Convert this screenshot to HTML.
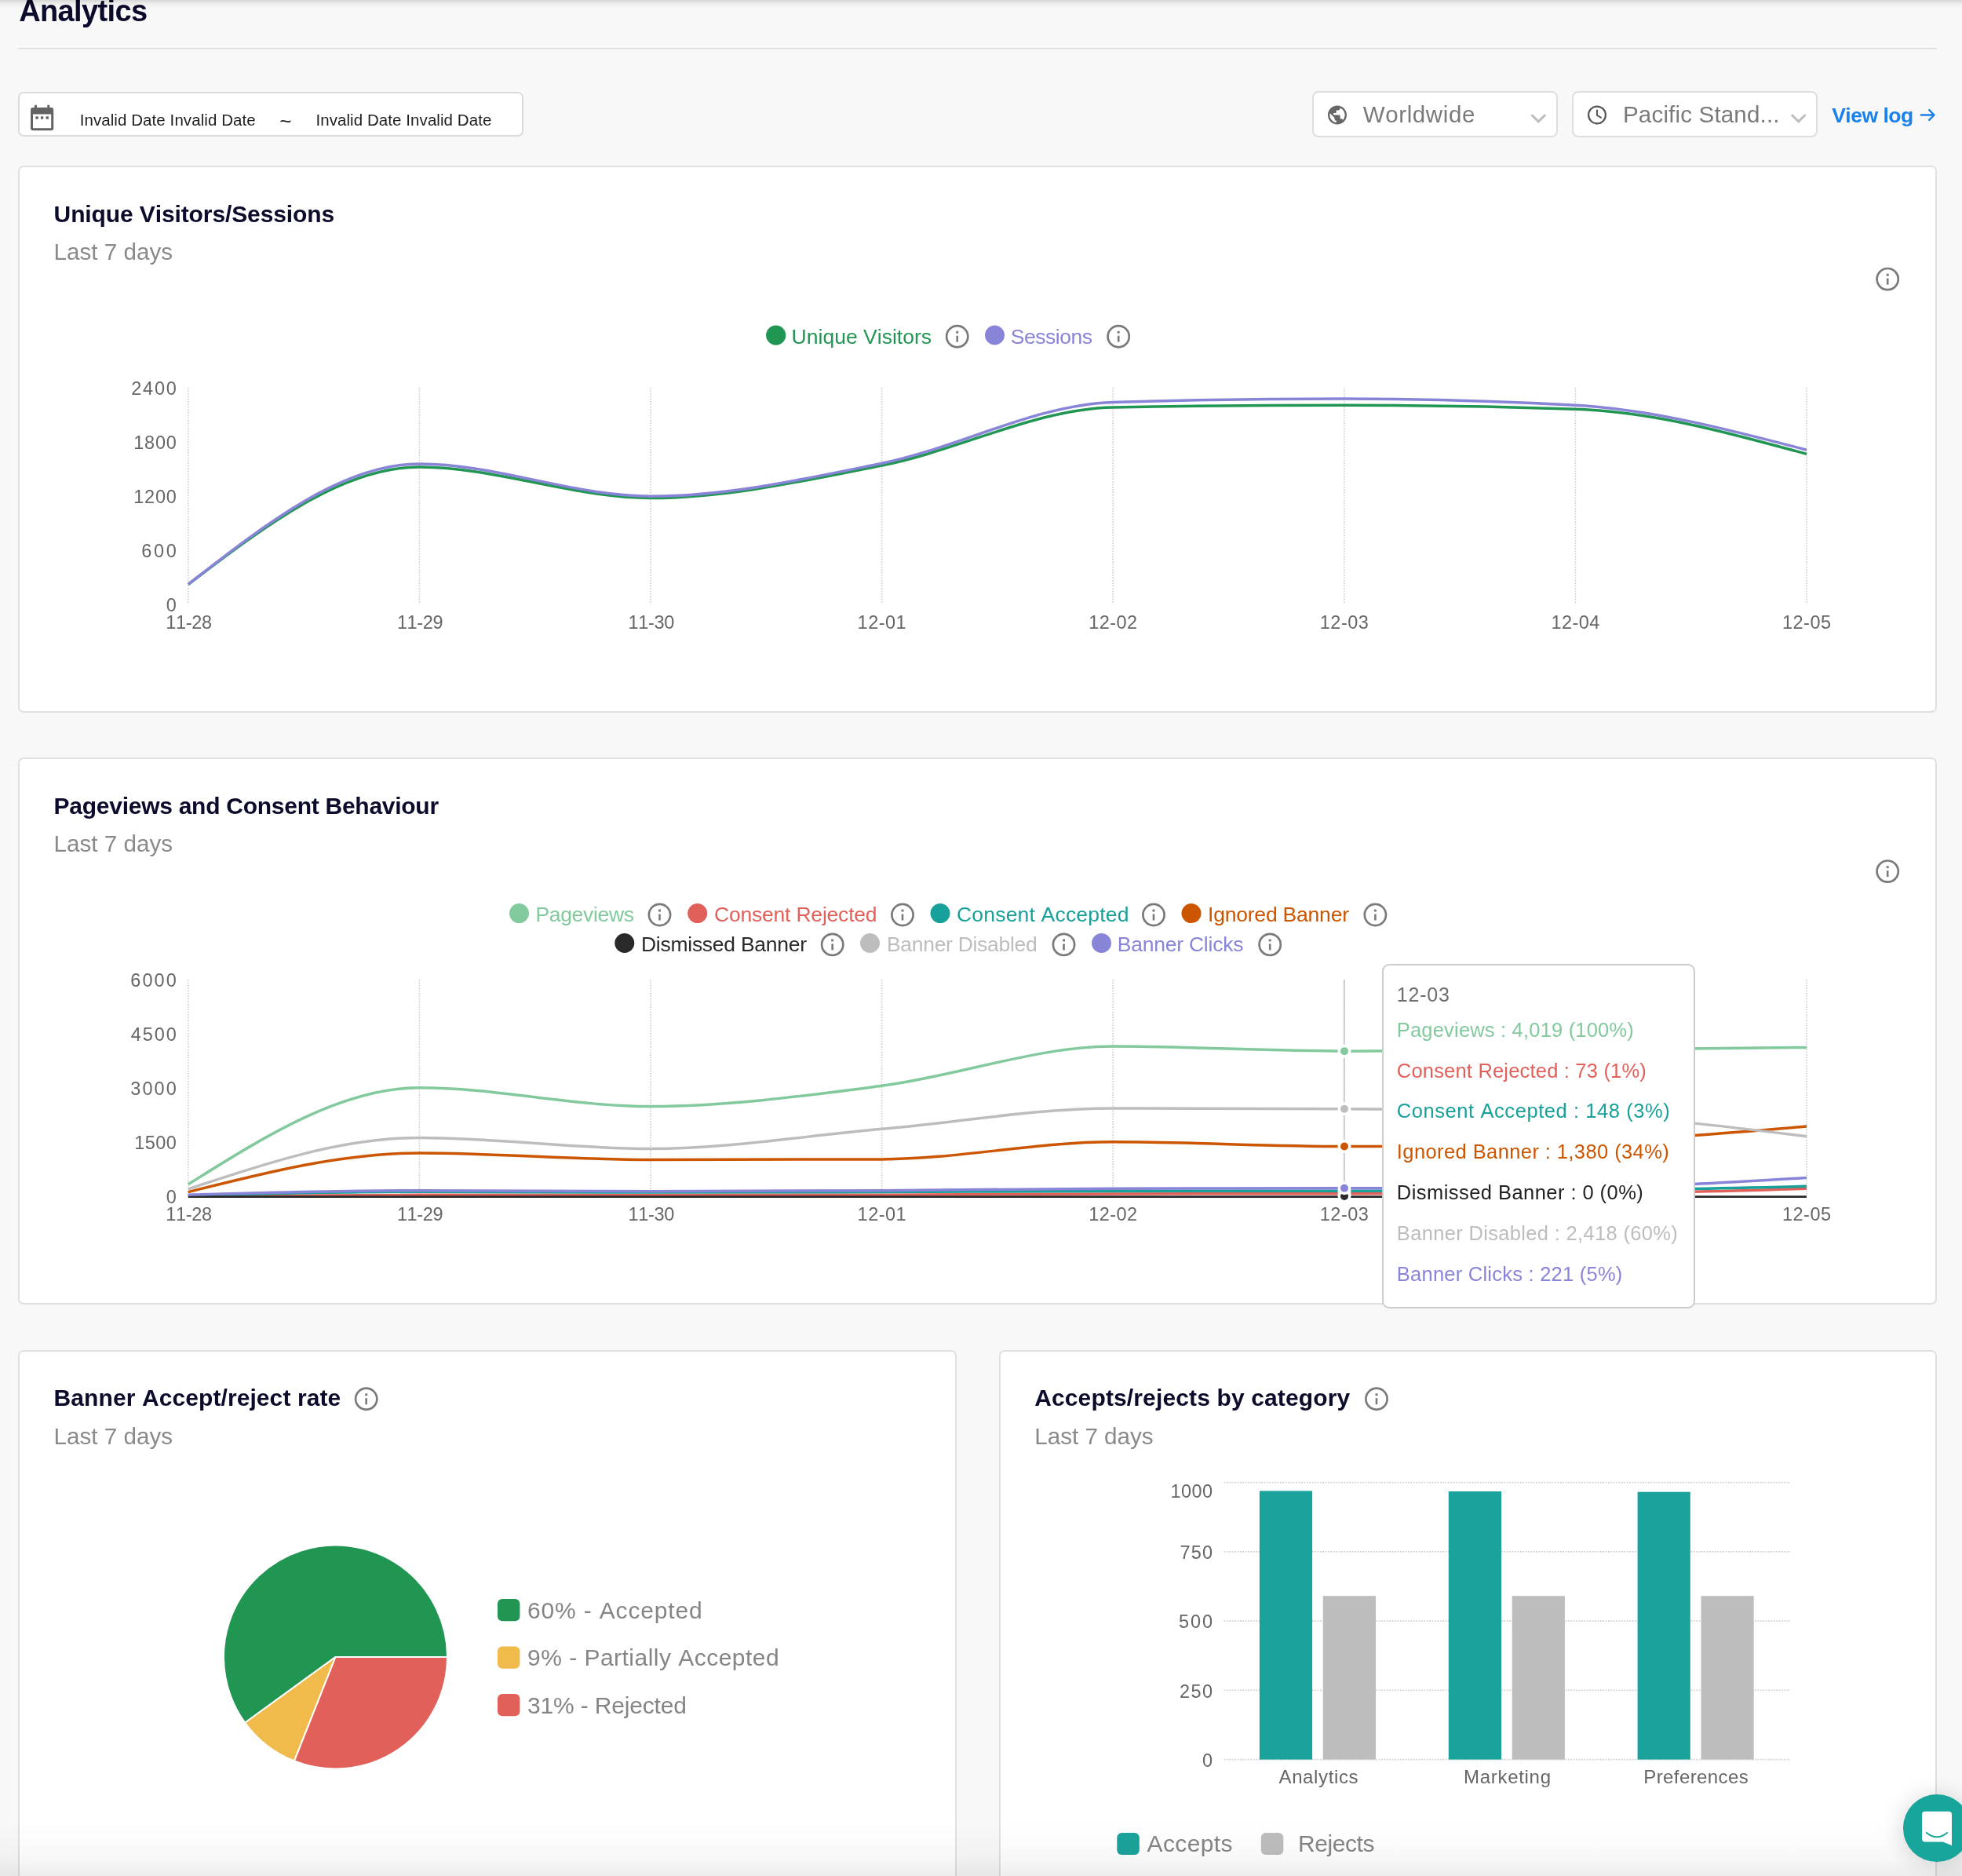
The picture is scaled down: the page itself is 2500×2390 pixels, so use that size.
<!DOCTYPE html>
<html lang="en"><head><meta charset="utf-8"><title>Analytics</title>
<style>
*{box-sizing:border-box;margin:0;padding:0}
html,body{width:2500px;height:2390px;overflow:hidden;background:#f8f8f8;}
body{position:relative;font-family:"Liberation Sans",sans-serif;font-kerning:none;-webkit-font-smoothing:antialiased;}
.t{position:absolute;white-space:nowrap;display:block;}
.hr{position:absolute;height:3px;background:linear-gradient(to bottom,#dcdcdc 0,#dcdcdc 1px,#e9e9e9 1px,#e9e9e9 2px,#fbfbfb 2px,#fbfbfb 3px);}
.box{position:absolute;background:#ffffff;border:2px solid #dedede;border-radius:7px;}
.card{position:absolute;background:#ffffff;border:2px solid #e0e0e0;border-radius:7px;}
.tip{position:absolute;background:#ffffff;border:2px solid #cccccc;border-radius:9px;}
.layer{position:absolute;left:0;top:0;width:2500px;height:2390px;pointer-events:none;}
.topshade{position:absolute;left:0;top:0;width:2500px;height:11px;background:linear-gradient(to bottom,rgba(0,0,0,0.13),rgba(0,0,0,0.055) 35%,rgba(0,0,0,0.018) 70%,rgba(0,0,0,0));}
.botshade{position:absolute;left:0;top:2320px;width:2500px;height:70px;background:linear-gradient(to bottom,rgba(0,0,0,0) 0%,rgba(0,0,0,0.01) 35%,rgba(0,0,0,0.032) 70%,rgba(0,0,0,0.07) 100%);}
.chat{position:absolute;border-radius:50%;background:#18a59c;box-shadow:0 2px 30px rgba(0,0,0,0.17);}
</style></head><body>
<main style="will-change:transform">
<header>
<span class="t" style="left:24.20px;top:-8.87px;font-size:38px;line-height:46px;color:#0b0b2b;letter-spacing:-0.620px;font-weight:700;">Analytics</span>
<div class="hr" style="left:23px;top:61px;width:2445px;"></div>
</header>
<div class="toolbar">
<div class="box" style="left:23px;top:117px;width:644px;height:57px;border-color:#dbdbdb;"></div>
<span class="t" style="left:101.70px;top:140.40px;font-size:20.5px;line-height:25px;color:#1e1e1e;letter-spacing:0.075px;">Invalid Date Invalid Date</span>
<span class="t" style="left:356.20px;top:138.69px;font-size:26px;line-height:31px;color:#1e1e1e;">~</span>
<span class="t" style="left:402.40px;top:140.40px;font-size:20.5px;line-height:25px;color:#1e1e1e;letter-spacing:0.075px;">Invalid Date Invalid Date</span>
<div class="box" style="left:1672px;top:116px;width:313px;height:59px;border-radius:8px;"></div>
<div class="box" style="left:2003px;top:116px;width:312.5px;height:59px;border-radius:8px;"></div>
<span class="t" style="left:1736.80px;top:128.08px;font-size:29.5px;line-height:35px;color:#7a7a7a;letter-spacing:0.603px;">Worldwide</span>
<span class="t" style="left:2068.00px;top:128.08px;font-size:29.5px;line-height:35px;color:#7a7a7a;letter-spacing:0.182px;">Pacific Stand...</span>
<span class="t" style="left:2334.20px;top:130.82px;font-size:26.5px;line-height:32px;color:#1a80ea;letter-spacing:-0.501px;font-weight:700;">View log</span>
</div>
<div class="card" style="left:23px;top:210.5px;width:2445px;height:697px;"></div>
<div class="card" style="left:23px;top:965px;width:2445px;height:697px;"></div>
<div class="card" style="left:23px;top:1719.5px;width:1196px;height:720px;"></div>
<div class="card" style="left:1272.5px;top:1719.5px;width:1195.5px;height:720px;"></div>
<section>
<span class="t" style="left:68.60px;top:254.50px;font-size:30px;line-height:36px;color:#0b0b2b;letter-spacing:-0.112px;font-weight:700;">Unique Visitors/Sessions</span>
<span class="t" style="left:68.60px;top:302.94px;font-size:29.6px;line-height:36px;color:#8a8a8a;letter-spacing:0.012px;">Last 7 days</span>
<span class="t" style="left:1008.60px;top:412.92px;font-size:26.5px;line-height:32px;color:#219653;letter-spacing:0.018px;">Unique Visitors</span>
<span class="t" style="left:1287.80px;top:412.92px;font-size:26.5px;line-height:32px;color:#8884d8;letter-spacing:-0.476px;">Sessions</span>
<span class="t" style="left:167.30px;top:481.16px;font-size:23.5px;line-height:28px;color:#666666;letter-spacing:1.740px;">2400</span>
<span class="t" style="left:170.30px;top:550.16px;font-size:23.5px;line-height:28px;color:#666666;letter-spacing:0.740px;">1800</span>
<span class="t" style="left:170.30px;top:619.16px;font-size:23.5px;line-height:28px;color:#666666;letter-spacing:0.740px;">1200</span>
<span class="t" style="left:180.30px;top:688.16px;font-size:23.5px;line-height:28px;color:#666666;letter-spacing:2.645px;">600</span>
<span class="t" style="left:211.73px;top:757.16px;font-size:23.5px;line-height:28px;color:#666666;">0</span>
<span class="t" style="left:211.30px;top:778.56px;font-size:23.5px;line-height:28px;color:#666666;letter-spacing:-0.341px;">11-28</span>
<span class="t" style="left:505.90px;top:778.56px;font-size:23.5px;line-height:28px;color:#666666;letter-spacing:-0.341px;">11-29</span>
<span class="t" style="left:800.50px;top:778.56px;font-size:23.5px;line-height:28px;color:#666666;letter-spacing:-0.341px;">11-30</span>
<span class="t" style="left:1092.60px;top:778.56px;font-size:23.5px;line-height:28px;color:#666666;letter-spacing:0.473px;">12-01</span>
<span class="t" style="left:1387.20px;top:778.56px;font-size:23.5px;line-height:28px;color:#666666;letter-spacing:0.473px;">12-02</span>
<span class="t" style="left:1681.80px;top:778.56px;font-size:23.5px;line-height:28px;color:#666666;letter-spacing:0.473px;">12-03</span>
<span class="t" style="left:1976.40px;top:778.56px;font-size:23.5px;line-height:28px;color:#666666;letter-spacing:0.473px;">12-04</span>
<span class="t" style="left:2271.00px;top:778.56px;font-size:23.5px;line-height:28px;color:#666666;letter-spacing:0.473px;">12-05</span>
</section>
<section>
<span class="t" style="left:68.60px;top:1009.01px;font-size:30px;line-height:36px;color:#0b0b2b;letter-spacing:-0.266px;font-weight:700;">Pageviews and Consent Behaviour</span>
<span class="t" style="left:68.60px;top:1057.44px;font-size:29.6px;line-height:36px;color:#8a8a8a;letter-spacing:0.012px;">Last 7 days</span>
<span class="t" style="left:682.40px;top:1149.02px;font-size:26.5px;line-height:32px;color:#82ca9d;letter-spacing:-0.320px;">Pageviews</span>
<span class="t" style="left:910.00px;top:1149.02px;font-size:26.5px;line-height:32px;color:#e2605a;letter-spacing:-0.204px;">Consent Rejected</span>
<span class="t" style="left:1219.00px;top:1149.02px;font-size:26.5px;line-height:32px;color:#18a19a;letter-spacing:0.194px;">Consent Accepted</span>
<span class="t" style="left:1539.00px;top:1149.02px;font-size:26.5px;line-height:32px;color:#cc5500;letter-spacing:-0.208px;">Ignored Banner</span>
<span class="t" style="left:817.00px;top:1187.02px;font-size:26.5px;line-height:32px;color:#2a2a2a;letter-spacing:-0.269px;">Dismissed Banner</span>
<span class="t" style="left:1130.00px;top:1187.02px;font-size:26.5px;line-height:32px;color:#bdbdbd;letter-spacing:-0.303px;">Banner Disabled</span>
<span class="t" style="left:1423.70px;top:1187.02px;font-size:26.5px;line-height:32px;color:#8884d8;letter-spacing:-0.224px;">Banner Clicks</span>
<span class="t" style="left:166.30px;top:1235.16px;font-size:23.5px;line-height:28px;color:#666666;letter-spacing:2.073px;">6000</span>
<span class="t" style="left:166.80px;top:1304.16px;font-size:23.5px;line-height:28px;color:#666666;letter-spacing:1.907px;">4500</span>
<span class="t" style="left:166.30px;top:1373.16px;font-size:23.5px;line-height:28px;color:#666666;letter-spacing:2.073px;">3000</span>
<span class="t" style="left:171.30px;top:1442.16px;font-size:23.5px;line-height:28px;color:#666666;letter-spacing:0.407px;">1500</span>
<span class="t" style="left:211.73px;top:1511.16px;font-size:23.5px;line-height:28px;color:#666666;">0</span>
<span class="t" style="left:211.30px;top:1532.56px;font-size:23.5px;line-height:28px;color:#666666;letter-spacing:-0.341px;">11-28</span>
<span class="t" style="left:505.90px;top:1532.56px;font-size:23.5px;line-height:28px;color:#666666;letter-spacing:-0.341px;">11-29</span>
<span class="t" style="left:800.50px;top:1532.56px;font-size:23.5px;line-height:28px;color:#666666;letter-spacing:-0.341px;">11-30</span>
<span class="t" style="left:1092.60px;top:1532.56px;font-size:23.5px;line-height:28px;color:#666666;letter-spacing:0.473px;">12-01</span>
<span class="t" style="left:1387.20px;top:1532.56px;font-size:23.5px;line-height:28px;color:#666666;letter-spacing:0.473px;">12-02</span>
<span class="t" style="left:1681.80px;top:1532.56px;font-size:23.5px;line-height:28px;color:#666666;letter-spacing:0.473px;">12-03</span>
<span class="t" style="left:2271.00px;top:1532.56px;font-size:23.5px;line-height:28px;color:#666666;letter-spacing:0.473px;">12-05</span>
</section>
<section>
<span class="t" style="left:68.60px;top:1762.81px;font-size:30px;line-height:36px;color:#0b0b2b;letter-spacing:0.088px;font-weight:700;">Banner Accept/reject rate</span>
<span class="t" style="left:68.60px;top:1812.14px;font-size:29.6px;line-height:36px;color:#8a8a8a;letter-spacing:0.012px;">Last 7 days</span>
<span class="t" style="left:672.00px;top:2033.70px;font-size:30px;line-height:36px;color:#858585;letter-spacing:0.836px;">60% - Accepted</span>
<span class="t" style="left:672.00px;top:2094.20px;font-size:30px;line-height:36px;color:#858585;letter-spacing:0.478px;">9% - Partially Accepted</span>
<span class="t" style="left:672.00px;top:2154.70px;font-size:30px;line-height:36px;color:#858585;letter-spacing:-0.162px;">31% - Rejected</span>
</section>
<section>
<span class="t" style="left:1318.20px;top:1762.81px;font-size:30px;line-height:36px;color:#0b0b2b;letter-spacing:0.133px;font-weight:700;">Accepts/rejects by category</span>
<span class="t" style="left:1318.20px;top:1812.14px;font-size:29.6px;line-height:36px;color:#8a8a8a;letter-spacing:0.012px;">Last 7 days</span>
<span class="t" style="left:1491.50px;top:1885.76px;font-size:23.5px;line-height:28px;color:#666666;letter-spacing:0.407px;">1000</span>
<span class="t" style="left:1503.50px;top:1964.06px;font-size:23.5px;line-height:28px;color:#666666;letter-spacing:1.145px;">750</span>
<span class="t" style="left:1502.00px;top:2052.26px;font-size:23.5px;line-height:28px;color:#666666;letter-spacing:1.895px;">500</span>
<span class="t" style="left:1503.00px;top:2140.56px;font-size:23.5px;line-height:28px;color:#666666;letter-spacing:1.395px;">250</span>
<span class="t" style="left:1531.93px;top:2228.76px;font-size:23.5px;line-height:28px;color:#666666;">0</span>
<span class="t" style="left:1629.50px;top:2249.48px;font-size:24px;line-height:29px;color:#666666;letter-spacing:0.620px;">Analytics</span>
<span class="t" style="left:1865.00px;top:2249.48px;font-size:24px;line-height:29px;color:#666666;letter-spacing:0.703px;">Marketing</span>
<span class="t" style="left:2094.25px;top:2249.48px;font-size:24px;line-height:29px;color:#666666;letter-spacing:0.410px;">Preferences</span>
<span class="t" style="left:1461.50px;top:2330.80px;font-size:30px;line-height:36px;color:#858585;letter-spacing:0.381px;">Accepts</span>
<span class="t" style="left:1654.00px;top:2330.80px;font-size:30px;line-height:36px;color:#858585;letter-spacing:-0.423px;">Rejects</span>
</section>
<svg class="layer" width="2500" height="2390" viewBox="0 0 2500 2390">
<g fill="#636363"><path d="M42 137h23.2a3 3 0 0 1 3 3v23.3a3 3 0 0 1-3 3h-23.2a3 3 0 0 1-3-3v-23.3a3 3 0 0 1 3-3zM42 145.4v17.8h23.2v-17.8z" fill-rule="evenodd"/><rect x="44" y="133.8" width="2.9" height="5"/><rect x="60.3" y="133.8" width="2.9" height="5"/><rect x="45.4" y="148.3" width="3.3" height="3.4"/><rect x="51.9" y="148.3" width="3.3" height="3.4"/><rect x="58.6" y="148.3" width="3.3" height="3.4"/></g>
<g transform="translate(1689.6,132.1) scale(1.2)" fill="#666666"><path d="M12 2C6.48 2 2 6.48 2 12s4.48 10 10 10 10-4.48 10-10S17.52 2 12 2zm-1 17.93c-3.95-.49-7-3.85-7-7.93 0-.62.08-1.21.21-1.79L9 15v1c0 1.1.9 2 2 2v1.93zm6.9-2.54c-.26-.81-1-1.39-1.9-1.39h-1v-3c0-.55-.45-1-1-1H8v-2h2c.55 0 1-.45 1-1V7h2c1.1 0 2-.9 2-2v-.41c2.93 1.19 5 4.06 5 7.41 0 2.08-.8 3.97-2.1 5.39z"/></g>
<g stroke="#555555" fill="none" stroke-width="2.2"><circle cx="2035" cy="146.5" r="10.9"/><path d="M2035 140.5v6.3l5 3" stroke-linecap="round" stroke-linejoin="round" stroke-width="2"/></g>
<path d="M1951.5 146.2l8.8 8.6l8.8 -8.6" stroke="#bdbdbd" stroke-width="3" fill="none"/>
<path d="M2282.8999999999996 146.2l8.8 8.6l8.8 -8.6" stroke="#bdbdbd" stroke-width="3" fill="none"/>
<path d="M2447.8 146.5h16.6M2458.2 140.2l6.3 6.3l-6.3 6.3" stroke="#1a80ea" stroke-width="2.4" fill="none" stroke-linecap="round" stroke-linejoin="round"/>
<g stroke="#7a7a7a" fill="none"><circle cx="2405.20" cy="355.60" r="13.6" stroke-width="2.7"/><line x1="2405.20" y1="354.60" x2="2405.20" y2="362.60" stroke-width="2.6"/></g><rect x="2403.70" y="348.70" width="3" height="2.9" fill="#7a7a7a"/>
<circle cx="988.7" cy="427.1" r="12.6" fill="#219653"/>
<g stroke="#7a7a7a" fill="none"><circle cx="1219.70" cy="428.70" r="13.6" stroke-width="2.7"/><line x1="1219.70" y1="427.70" x2="1219.70" y2="435.70" stroke-width="2.6"/></g><rect x="1218.20" y="421.80" width="3" height="2.9" fill="#7a7a7a"/>
<circle cx="1267.5" cy="427" r="12.5" fill="#8884d8"/>
<g stroke="#7a7a7a" fill="none"><circle cx="1425.20" cy="428.70" r="13.6" stroke-width="2.7"/><line x1="1425.20" y1="427.70" x2="1425.20" y2="435.70" stroke-width="2.6"/></g><rect x="1423.70" y="421.80" width="3" height="2.9" fill="#7a7a7a"/>
<line x1="239.80" y1="494" x2="239.80" y2="770" stroke="#cfcfcf" stroke-width="1.6" stroke-dasharray="1.7 1.7"/>
<line x1="534.40" y1="494" x2="534.40" y2="770" stroke="#cfcfcf" stroke-width="1.6" stroke-dasharray="1.7 1.7"/>
<line x1="829.00" y1="494" x2="829.00" y2="770" stroke="#cfcfcf" stroke-width="1.6" stroke-dasharray="1.7 1.7"/>
<line x1="1123.60" y1="494" x2="1123.60" y2="770" stroke="#cfcfcf" stroke-width="1.6" stroke-dasharray="1.7 1.7"/>
<line x1="1418.20" y1="494" x2="1418.20" y2="770" stroke="#cfcfcf" stroke-width="1.6" stroke-dasharray="1.7 1.7"/>
<line x1="1712.80" y1="494" x2="1712.80" y2="770" stroke="#cfcfcf" stroke-width="1.6" stroke-dasharray="1.7 1.7"/>
<line x1="2007.40" y1="494" x2="2007.40" y2="770" stroke="#cfcfcf" stroke-width="1.6" stroke-dasharray="1.7 1.7"/>
<line x1="2302.00" y1="494" x2="2302.00" y2="770" stroke="#cfcfcf" stroke-width="1.6" stroke-dasharray="1.7 1.7"/>
<path d="M239.80,744.60C338.00,669.80 436.20,595.00 534.40,595.00C632.60,595.00 730.80,634.50 829.00,634.50C927.20,634.50 1025.40,612.25 1123.60,593.00C1221.80,573.75 1320.00,520.87 1418.20,519.00C1516.40,517.13 1614.60,516.20 1712.80,516.20C1811.00,516.20 1909.20,517.87 2007.40,521.20C2105.60,524.53 2203.80,551.47 2302.00,578.40" stroke="#219653" stroke-width="3.5" fill="none"/>
<path d="M239.80,744.40C338.00,667.70 436.20,591.00 534.40,591.00C632.60,591.00 730.80,632.20 829.00,632.20C927.20,632.20 1025.40,610.17 1123.60,590.20C1221.80,570.23 1320.00,515.33 1418.20,512.40C1516.40,509.47 1614.60,508.00 1712.80,508.00C1811.00,508.00 1909.20,510.73 2007.40,516.20C2105.60,521.67 2203.80,547.43 2302.00,573.20" stroke="#8884d8" stroke-width="3.5" fill="none"/>
<g stroke="#7a7a7a" fill="none"><circle cx="2405.20" cy="1110.10" r="13.6" stroke-width="2.7"/><line x1="2405.20" y1="1109.10" x2="2405.20" y2="1117.10" stroke-width="2.6"/></g><rect x="2403.70" y="1103.20" width="3" height="2.9" fill="#7a7a7a"/>
<circle cx="661.5" cy="1163.6" r="12.5" fill="#82ca9d"/>
<g stroke="#7a7a7a" fill="none"><circle cx="840.50" cy="1165.50" r="13.6" stroke-width="2.7"/><line x1="840.50" y1="1164.50" x2="840.50" y2="1172.50" stroke-width="2.6"/></g><rect x="839.00" y="1158.60" width="3" height="2.9" fill="#7a7a7a"/>
<circle cx="888.7" cy="1163.6" r="12.5" fill="#e2605a"/>
<g stroke="#7a7a7a" fill="none"><circle cx="1150.00" cy="1165.50" r="13.6" stroke-width="2.7"/><line x1="1150.00" y1="1164.50" x2="1150.00" y2="1172.50" stroke-width="2.6"/></g><rect x="1148.50" y="1158.60" width="3" height="2.9" fill="#7a7a7a"/>
<circle cx="1198" cy="1163.6" r="12.5" fill="#18a19a"/>
<g stroke="#7a7a7a" fill="none"><circle cx="1470.00" cy="1165.50" r="13.6" stroke-width="2.7"/><line x1="1470.00" y1="1164.50" x2="1470.00" y2="1172.50" stroke-width="2.6"/></g><rect x="1468.50" y="1158.60" width="3" height="2.9" fill="#7a7a7a"/>
<circle cx="1518" cy="1163.6" r="12.5" fill="#cc5500"/>
<g stroke="#7a7a7a" fill="none"><circle cx="1752.40" cy="1165.50" r="13.6" stroke-width="2.7"/><line x1="1752.40" y1="1164.50" x2="1752.40" y2="1172.50" stroke-width="2.6"/></g><rect x="1750.90" y="1158.60" width="3" height="2.9" fill="#7a7a7a"/>
<circle cx="795.8" cy="1201.5" r="12.5" fill="#2a2a2a"/>
<g stroke="#7a7a7a" fill="none"><circle cx="1060.70" cy="1203.40" r="13.6" stroke-width="2.7"/><line x1="1060.70" y1="1202.40" x2="1060.70" y2="1210.40" stroke-width="2.6"/></g><rect x="1059.20" y="1196.50" width="3" height="2.9" fill="#7a7a7a"/>
<circle cx="1108.5" cy="1201.5" r="12.5" fill="#bdbdbd"/>
<g stroke="#7a7a7a" fill="none"><circle cx="1355.50" cy="1203.40" r="13.6" stroke-width="2.7"/><line x1="1355.50" y1="1202.40" x2="1355.50" y2="1210.40" stroke-width="2.6"/></g><rect x="1354.00" y="1196.50" width="3" height="2.9" fill="#7a7a7a"/>
<circle cx="1403.5" cy="1201.5" r="12.5" fill="#8884d8"/>
<g stroke="#7a7a7a" fill="none"><circle cx="1618.20" cy="1203.40" r="13.6" stroke-width="2.7"/><line x1="1618.20" y1="1202.40" x2="1618.20" y2="1210.40" stroke-width="2.6"/></g><rect x="1616.70" y="1196.50" width="3" height="2.9" fill="#7a7a7a"/>
<line x1="239.80" y1="1248" x2="239.80" y2="1524" stroke="#cfcfcf" stroke-width="1.6" stroke-dasharray="1.7 1.7"/>
<line x1="534.40" y1="1248" x2="534.40" y2="1524" stroke="#cfcfcf" stroke-width="1.6" stroke-dasharray="1.7 1.7"/>
<line x1="829.00" y1="1248" x2="829.00" y2="1524" stroke="#cfcfcf" stroke-width="1.6" stroke-dasharray="1.7 1.7"/>
<line x1="1123.60" y1="1248" x2="1123.60" y2="1524" stroke="#cfcfcf" stroke-width="1.6" stroke-dasharray="1.7 1.7"/>
<line x1="1418.20" y1="1248" x2="1418.20" y2="1524" stroke="#cfcfcf" stroke-width="1.6" stroke-dasharray="1.7 1.7"/>
<line x1="1712.80" y1="1248" x2="1712.80" y2="1524" stroke="#cfcfcf" stroke-width="1.6" stroke-dasharray="1.7 1.7"/>
<line x1="2007.40" y1="1248" x2="2007.40" y2="1524" stroke="#cfcfcf" stroke-width="1.6" stroke-dasharray="1.7 1.7"/>
<line x1="2302.00" y1="1248" x2="2302.00" y2="1524" stroke="#cfcfcf" stroke-width="1.6" stroke-dasharray="1.7 1.7"/>
<line x1="1712.8" y1="1248" x2="1712.8" y2="1524" stroke="#cccccc" stroke-width="2"/>
<path d="M239.80,1508.82C338.00,1447.27 436.20,1385.72 534.40,1385.72C632.60,1385.72 730.80,1409.60 829.00,1409.60C927.20,1409.60 1025.40,1396.08 1123.60,1383.33C1221.80,1370.58 1320.00,1333.10 1418.20,1333.10C1516.40,1333.10 1614.60,1339.13 1712.80,1339.13C1811.00,1339.13 1909.20,1338.21 2007.40,1337.42C2105.60,1336.63 2203.80,1335.51 2302.00,1334.39" stroke="#82ca9d" stroke-width="3.5" fill="none"/>
<path d="M239.80,1523.77C338.00,1523.03 436.20,1522.30 534.40,1522.30C632.60,1522.30 730.80,1522.39 829.00,1522.39C927.20,1522.39 1025.40,1522.31 1123.60,1522.16C1221.80,1522.01 1320.00,1521.26 1418.20,1521.01C1516.40,1520.76 1614.60,1520.74 1712.80,1520.64C1811.00,1520.54 1909.20,1520.57 2007.40,1520.41C2105.60,1520.26 2203.80,1517.28 2302.00,1514.29" stroke="#e2605a" stroke-width="3.5" fill="none"/>
<path d="M239.80,1523.08C338.00,1520.69 436.20,1518.30 534.40,1518.30C632.60,1518.30 730.80,1519.12 829.00,1519.12C927.20,1519.12 1025.40,1518.76 1123.60,1518.48C1221.80,1518.20 1320.00,1517.58 1418.20,1517.42C1516.40,1517.27 1614.60,1517.35 1712.80,1517.19C1811.00,1517.04 1909.20,1516.95 2007.40,1516.46C2105.60,1515.97 2203.80,1513.63 2302.00,1511.30" stroke="#18a19a" stroke-width="3.5" fill="none"/>
<path d="M239.80,1518.62C338.00,1493.76 436.20,1468.89 534.40,1468.89C632.60,1468.89 730.80,1477.49 829.00,1477.49C927.20,1477.49 1025.40,1477.29 1123.60,1476.90C1221.80,1476.50 1320.00,1454.86 1418.20,1454.86C1516.40,1454.86 1614.60,1460.52 1712.80,1460.52C1811.00,1460.52 1909.20,1458.68 2007.40,1455.00C2105.60,1451.32 2203.80,1443.15 2302.00,1434.99" stroke="#cc5500" stroke-width="3.5" fill="none"/>
<path d="M239.80,1524.6L2302.00,1524.6" stroke="#2a2a2a" stroke-width="2.9" fill="none"/>
<path d="M239.80,1514.89C338.00,1482.14 436.20,1449.39 534.40,1449.39C632.60,1449.39 730.80,1463.42 829.00,1463.42C927.20,1463.42 1025.40,1446.91 1123.60,1438.35C1221.80,1429.78 1320.00,1412.04 1418.20,1412.04C1516.40,1412.04 1614.60,1412.28 1712.80,1412.77C1811.00,1413.26 1909.20,1414.95 2007.40,1419.30C2105.60,1423.66 2203.80,1435.67 2302.00,1447.69" stroke="#bdbdbd" stroke-width="3.5" fill="none"/>
<path d="M239.80,1522.21C338.00,1519.45 436.20,1516.69 534.40,1516.69C632.60,1516.69 730.80,1517.79 829.00,1517.79C927.20,1517.79 1025.40,1517.28 1123.60,1516.69C1221.80,1516.09 1320.00,1514.45 1418.20,1514.20C1516.40,1513.96 1614.60,1514.04 1712.80,1513.83C1811.00,1513.63 1909.20,1513.54 2007.40,1512.96C2105.60,1512.38 2203.80,1506.44 2302.00,1500.49" stroke="#8884d8" stroke-width="3.5" fill="none"/>
<circle cx="1713.0" cy="1339.13" r="8.5" fill="#ffffff"/><circle cx="1713.0" cy="1339.13" r="5" fill="#82ca9d"/>
<circle cx="1713.0" cy="1520.64" r="8.5" fill="#ffffff"/><circle cx="1713.0" cy="1520.64" r="5" fill="#e2605a"/>
<circle cx="1713.0" cy="1517.19" r="8.5" fill="#ffffff"/><circle cx="1713.0" cy="1517.19" r="5" fill="#18a19a"/>
<circle cx="1713.0" cy="1460.52" r="8.5" fill="#ffffff"/><circle cx="1713.0" cy="1460.52" r="5" fill="#cc5500"/>
<circle cx="1713.0" cy="1524.00" r="8.5" fill="#ffffff"/><circle cx="1713.0" cy="1524.00" r="5" fill="#2a2a2a"/>
<circle cx="1713.0" cy="1412.77" r="8.5" fill="#ffffff"/><circle cx="1713.0" cy="1412.77" r="5" fill="#bdbdbd"/>
<circle cx="1713.0" cy="1513.83" r="8.5" fill="#ffffff"/><circle cx="1713.0" cy="1513.83" r="5" fill="#8884d8"/>
<g stroke="#7a7a7a" fill="none"><circle cx="466.70" cy="1782.20" r="13.6" stroke-width="2.7"/><line x1="466.70" y1="1781.20" x2="466.70" y2="1789.20" stroke-width="2.6"/></g><rect x="465.20" y="1775.30" width="3" height="2.9" fill="#7a7a7a"/>
<path d="M427.5,2111.0L570.00,2111.00A142.5,142.5 0 1 0 312.22,2194.76Z" fill="#219653" stroke="#ffffff" stroke-width="2" stroke-linejoin="round"/>
<path d="M427.5,2111.0L312.22,2194.76A142.5,142.5 0 0 0 375.04,2243.49Z" fill="#f0bb4b" stroke="#ffffff" stroke-width="2" stroke-linejoin="round"/>
<path d="M427.5,2111.0L375.04,2243.49A142.5,142.5 0 0 0 570.00,2111.00Z" fill="#e2605a" stroke="#ffffff" stroke-width="2" stroke-linejoin="round"/>
<rect x="634" y="2037.10" width="28.4" height="28.2" rx="6" fill="#219653"/>
<rect x="634" y="2097.60" width="28.4" height="28.2" rx="6" fill="#f0bb4b"/>
<rect x="634" y="2158.10" width="28.4" height="28.2" rx="6" fill="#e2605a"/>
<g stroke="#7a7a7a" fill="none"><circle cx="1754.00" cy="1782.20" r="13.6" stroke-width="2.7"/><line x1="1754.00" y1="1781.20" x2="1754.00" y2="1789.20" stroke-width="2.6"/></g><rect x="1752.50" y="1775.30" width="3" height="2.9" fill="#7a7a7a"/>
<line x1="1559.5" y1="1888.6" x2="2281" y2="1888.6" stroke="#cfcfcf" stroke-width="1.6" stroke-dasharray="1.7 1.7"/>
<line x1="1559.5" y1="1976.9" x2="2281" y2="1976.9" stroke="#cfcfcf" stroke-width="1.6" stroke-dasharray="1.7 1.7"/>
<line x1="1559.5" y1="2065.1" x2="2281" y2="2065.1" stroke="#cfcfcf" stroke-width="1.6" stroke-dasharray="1.7 1.7"/>
<line x1="1559.5" y1="2153.4" x2="2281" y2="2153.4" stroke="#cfcfcf" stroke-width="1.6" stroke-dasharray="1.7 1.7"/>
<line x1="1559.5" y1="2241.6" x2="2281" y2="2241.6" stroke="#cfcfcf" stroke-width="1.6" stroke-dasharray="1.7 1.7"/>
<rect x="1604.9" y="1899.4" width="67.2" height="342.20" fill="#1aa39c"/>
<rect x="1685.8" y="2033.2" width="67.2" height="208.40" fill="#bdbdbd"/>
<rect x="1845.8" y="1900.0" width="67.2" height="341.60" fill="#1aa39c"/>
<rect x="1926.7" y="2033.2" width="67.2" height="208.40" fill="#bdbdbd"/>
<rect x="2086.6" y="1900.7" width="67.2" height="340.90" fill="#1aa39c"/>
<rect x="2167.5" y="2033.2" width="67.2" height="208.40" fill="#bdbdbd"/>
<rect x="1423.3" y="2334.9" width="28.5" height="28" rx="6" fill="#1aa39c"/>
<rect x="1606.8" y="2334.9" width="28.5" height="28" rx="6" fill="#bdbdbd"/>
</svg>
<div class="tip" style="left:1761px;top:1228px;width:398.5px;height:439px;"></div>
<span class="t" style="left:1779.80px;top:1252.34px;font-size:25px;line-height:30px;color:#6e6e6e;letter-spacing:0.764px;">12-03</span>
<span class="t" style="left:1779.80px;top:1296.66px;font-size:25.5px;line-height:31px;color:#82ca9d;letter-spacing:0.188px;">Pageviews : 4,019 (100%)</span>
<span class="t" style="left:1779.80px;top:1348.56px;font-size:25.5px;line-height:31px;color:#e2605a;letter-spacing:0.190px;">Consent Rejected : 73 (1%)</span>
<span class="t" style="left:1779.80px;top:1400.46px;font-size:25.5px;line-height:31px;color:#18a19a;letter-spacing:0.569px;">Consent Accepted : 148 (3%)</span>
<span class="t" style="left:1779.80px;top:1452.36px;font-size:25.5px;line-height:31px;color:#cc5500;letter-spacing:0.408px;">Ignored Banner : 1,380 (34%)</span>
<span class="t" style="left:1779.80px;top:1504.26px;font-size:25.5px;line-height:31px;color:#222222;letter-spacing:0.447px;">Dismissed Banner : 0 (0%)</span>
<span class="t" style="left:1779.80px;top:1556.16px;font-size:25.5px;line-height:31px;color:#bdbdbd;letter-spacing:0.332px;">Banner Disabled : 2,418 (60%)</span>
<span class="t" style="left:1779.80px;top:1608.06px;font-size:25.5px;line-height:31px;color:#8884d8;letter-spacing:0.237px;">Banner Clicks : 221 (5%)</span>
<div class="botshade"></div>
<div class="chat" style="left:2425px;top:2286.2px;width:85.5px;height:85.5px;"></div>
<svg class="layer" width="2500" height="2390" viewBox="0 0 2500 2390"><path d="M2453 2307.7h30a4 4 0 0 1 4 4v39.2l-11.5-4.4h-22.5a4 4 0 0 1-4-4v-30.8a4 4 0 0 1 4-4z" fill="#ffffff"/><path d="M2454.8 2335q13.2 10.6 26.2 0" stroke="#18a59c" stroke-width="2" fill="none" stroke-linecap="round"/></svg>
<div class="topshade"></div>
</main></body></html>
